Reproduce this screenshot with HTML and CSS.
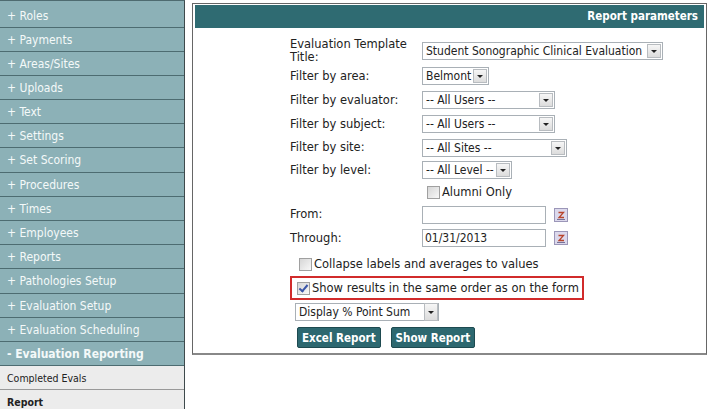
FILE: index.html
```html
<!DOCTYPE html>
<html lang="en">
<head>
    <meta charset="UTF-8">
    <title>Report parameters</title>
    <link rel="stylesheet" href="styles.css">
</head>
<body>
    <div class="page">
        <!-- left menu -->
        <ul class="menu">
            <li class="first">+ Roles</li>
            <li>+ Payments</li>
            <li>+ Areas/Sites</li>
            <li>+ Uploads</li>
            <li>+ Text</li>
            <li>+ Settings</li>
            <li>+ Set Scoring</li>
            <li>+ Procedures</li>
            <li>+ Times</li>
            <li>+ Employees</li>
            <li>+ Reports</li>
            <li>+ Pathologies Setup</li>
            <li>+ Evaluation Setup</li>
            <li>+ Evaluation Scheduling</li>
            <li class="open">- Evaluation Reporting</li>
            <li class="sub">Completed Evals</li>
            <li class="sub current">Report</li>
        </ul>

        <!-- report panel -->
        <div class="panel">
            <div class="panel-head">Report parameters</div>
            <div class="form">
                <div class="row tall">
                    <label>Evaluation Template Title:</label>
                    <div class="select"><span>Student Sonographic Clinical Evaluation</span><i class="arrow"></i></div>
                </div>
                <div class="row">
                    <label>Filter by area:</label>
                    <div class="select tight"><span>Belmont</span><i class="arrow"></i></div>
                </div>
                <div class="row">
                    <label>Filter by evaluator:</label>
                    <div class="select w-user"><span>-- All Users --</span><i class="arrow"></i></div>
                </div>
                <div class="row">
                    <label>Filter by subject:</label>
                    <div class="select w-user"><span>-- All Users --</span><i class="arrow"></i></div>
                </div>
                <div class="row short">
                    <label>Filter by site:</label>
                    <div class="select w-site"><span>-- All Sites --</span><i class="arrow"></i></div>
                </div>
                <div class="row shorter">
                    <label>Filter by level:</label>
                    <div class="select tight"><span>-- All Level --</span><i class="arrow"></i></div>
                </div>
                <div class="row shorter">
                    <label></label>
                    <div class="check-line"><i class="box"></i>Alumni Only</div>
                </div>
                <div class="row short">
                    <label>From:</label>
                    <div class="date"></div>
                    <svg class="cal" width="14" height="14" viewBox="0 0 14 14"><rect x="0.5" y="0.5" width="13" height="13" fill="#dcd9ec" stroke="#9b96b8"/><path d="M4.5 4.5h5L5 9.5h5" fill="none" stroke="#b8452c" stroke-width="1.3"/><path d="M3 11.5h8" stroke="#77739a"/></svg>
                </div>
                <div class="row">
                    <label>Through:</label>
                    <div class="date">01/31/2013</div>
                    <svg class="cal" width="14" height="14" viewBox="0 0 14 14"><rect x="0.5" y="0.5" width="13" height="13" fill="#dcd9ec" stroke="#9b96b8"/><path d="M4.5 4.5h5L5 9.5h5" fill="none" stroke="#b8452c" stroke-width="1.3"/><path d="M3 11.5h8" stroke="#77739a"/></svg>
                </div>

                <div class="options">
                    <div class="check-line collapse"><i class="box"></i>Collapse labels and averages to values</div>
                    <div class="check-line marked"><i class="box checked"></i>Show results in the same order as on the form</div>
                    <div class="select w-display"><span>Display % Point Sum</span><i class="arrow big"></i></div>
                    <div class="buttons">
                        <button>Excel Report</button>
                        <button>Show Report</button>
                    </div>
                </div>
            </div>
        </div>
    </div>
</body>
</html>
```

FILE: styles.css
```css
body {
    margin: 0;
    padding: 0;
    background-color: #fff;
    font-family: "DejaVu Sans", Verdana, sans-serif;
    font-size: 11.5px;
    color: #222;
}
.page {
    display: flex;
    align-items: flex-start;
}

/* left menu */
.menu {
    list-style: none;
    margin: 0;
    padding: 0;
    width: 184px;
    border-right: 1px solid #3e4a4c;
    border-top: 1px solid #4e6b70;
    flex-shrink: 0;
    font-family: "DejaVu Sans Condensed", "DejaVu Sans", sans-serif;
    font-stretch: condensed;
}
.menu li {
    height: 23.2px;
    line-height: 24px;
    padding-left: 7px;
    background-color: #8cb1b7;
    color: #f4f9f9;
    font-size: 12px;
    border-bottom: 1px solid #4d6c71;
}
.menu li.first {
    height: 25.5px;
    line-height: 30px;
}
.menu li.open {
    font-weight: bold;
}
.menu li.sub {
    background-color: #ececec;
    color: #222;
    font-size: 10.5px;
    border-bottom: 1px solid #999;
}
.menu li.current {
    font-weight: bold;
}

/* panel */
.panel {
    flex: 1;
    margin: 3px 4px 0 7px;
    border: 1px solid #666;
    border-bottom: 2px solid #888;
    padding: 1px 2px 0 2px;
}
.panel-head {
    height: 23px;
    line-height: 23px;
    background-color: #2f6b72;
    color: #fff;
    font-family: "DejaVu Sans Condensed", "DejaVu Sans", sans-serif;
    font-stretch: condensed;
    font-weight: bold;
    font-size: 11.5px;
    text-align: right;
    padding-right: 6px;
}
.form {
    padding: 9px 0 5px 95px;
}
.row {
    display: flex;
    align-items: center;
    height: 24px;
}
.row.tall {
    height: 27px;
}
.row.short {
    height: 23px;
}
.row.shorter {
    height: 22px;
}
.row label {
    width: 132px;
    flex-shrink: 0;
    line-height: 13px;
}

/* fake selects */
.select {
    display: flex;
    align-items: center;
    justify-content: space-between;
    height: 16px;
    border: 1px solid #a9b0b6;
    background: #fff;
    padding: 0 1px 0 3px;
    white-space: nowrap;
    font-family: "DejaVu Sans Condensed", "DejaVu Sans", sans-serif;
    font-stretch: condensed;
    font-size: 12px;
}
.arrow {
    display: block;
    position: relative;
    width: 12px;
    height: 12px;
    border: 1px solid #b8bcc0;
    background: linear-gradient(#f6f6f6, #dcdcdc);
    margin-left: 5px;
    flex-shrink: 0;
}
.select.tight .arrow {
    margin-left: 2px;
}
.arrow::after {
    content: "";
    position: absolute;
    left: 3px;
    top: 5px;
    border-left: 3px solid transparent;
    border-right: 3px solid transparent;
    border-top: 3px solid #222;
}
.arrow.big {
    height: 16px;
    margin-right: -1px;
}
.arrow.big::after {
    top: 7px;
}
.w-user { width: 127px; }
.w-site { width: 139px; }
.w-display { width: 138px; margin-left: 5px; }

.date {
    width: 118px;
    height: 16px;
    line-height: 16px;
    border: 1px solid #a9b0b6;
    padding: 0 2px;
    margin-right: 8px;
    font-family: "DejaVu Sans Condensed", "DejaVu Sans", sans-serif;
    font-stretch: condensed;
    font-size: 12px;
}
.cal {
    display: block;
}

/* checkboxes */
.check-line {
    display: flex;
    align-items: center;
    white-space: nowrap;
}
.box {
    display: block;
    position: relative;
    width: 11px;
    height: 11px;
    border: 1px solid #a0a0a0;
    background: linear-gradient(135deg, #d6d6d6, #f8f8f8);
    margin: 0 2px 0 5px;
}
.box.checked::after {
    content: "";
    position: absolute;
    left: 3px;
    top: 0;
    width: 3px;
    height: 7px;
    border-right: 2px solid #3a55a8;
    border-bottom: 2px solid #3a55a8;
    transform: rotate(40deg);
}
.options {
    padding-top: 2px;
}
.check-line.collapse {
    height: 24px;
    padding-left: 4px;
}
.check-line.marked {
    width: 290px;
    height: 20px;
    border: 2px solid #d12b2b;
    margin: 0 0 3px 0;
}
.buttons {
    display: flex;
    gap: 10px;
    padding: 6px 0 0 7px;
}
.buttons button {
    height: 21px;
    padding: 0 4px;
    background-color: #2d6870;
    color: #fff;
    border: 1px solid #1e4a50;
    border-radius: 2px;
    font-family: "DejaVu Sans Condensed", "DejaVu Sans", sans-serif;
    font-stretch: condensed;
    font-weight: bold;
    font-size: 11.5px;
}
```
